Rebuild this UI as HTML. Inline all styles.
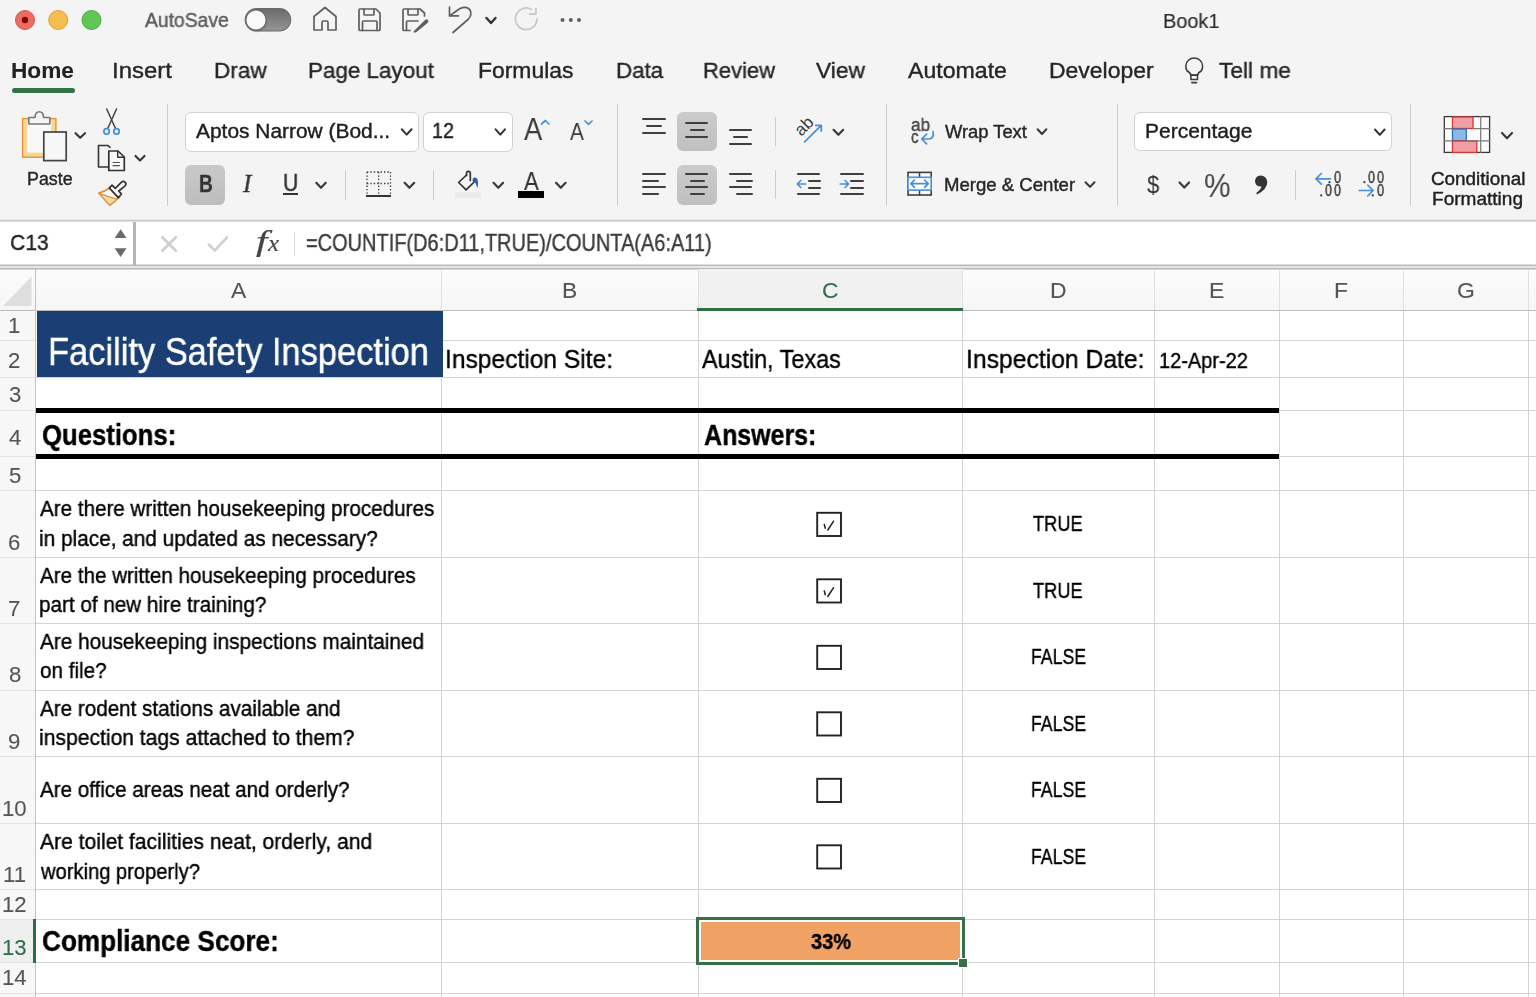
<!DOCTYPE html>
<html><head><meta charset="utf-8"><style>
html,body{margin:0;padding:0;width:1536px;height:997px;overflow:hidden;background:#fff;}
body>div,body>svg{position:absolute;}
.t{line-height:0;white-space:pre;will-change:transform;}
</style></head><body>
<div style="left:0px;top:0px;width:1536px;height:221px;background:#f4f4f4;"></div><div style="left:0px;top:219px;width:1536px;height:1px;background:#e9e9e9;"></div><div style="left:0px;top:220px;width:1536px;height:1px;background:#c6c6c6;"></div><div style="left:0px;top:221px;width:1536px;height:1px;background:#e2e2e2;"></div><div style="left:0px;top:222px;width:1536px;height:43px;background:#ffffff;"></div><div style="left:0px;top:264px;width:1536px;height:1px;background:#dedede;"></div><div style="left:0px;top:265px;width:1536px;height:1px;background:#b9b9b9;"></div><div style="left:0px;top:266px;width:1536px;height:2px;background:#e6e6e6;"></div><div style="left:0px;top:268px;width:1536px;height:1px;background:#b9b9b9;"></div><div style="left:0px;top:269px;width:1536px;height:1px;background:#d6d6d6;"></div><div style="left:133px;top:222px;width:3px;height:43px;background:#b5b5b5;"></div><div style="left:12px;top:88px;width:63px;height:5px;background:#317247;border-radius:2.5px"></div><div style="left:167px;top:104px;width:1px;height:102px;background:#cdcdcd;"></div><div style="left:185px;top:111.5px;width:234px;height:40px;background:#fff;box-sizing:border-box;border:1px solid #d2d2d2;border-radius:6px"></div><div style="left:423px;top:111.5px;width:89.5px;height:40px;background:#fff;box-sizing:border-box;border:1px solid #d2d2d2;border-radius:6px"></div><div style="left:185px;top:165px;width:40px;height:40px;background:linear-gradient(#c9c9c9,#bdbdbd);border-radius:6px"></div><div style="left:283px;top:193px;width:15px;height:1.8px;background:#333;"></div><div style="left:345px;top:170px;width:1px;height:30px;background:#cdcdcd;"></div><div style="left:366px;top:194.8px;width:25px;height:2px;background:#333;"></div><div style="left:433px;top:170px;width:1px;height:30px;background:#cdcdcd;"></div><div style="left:454.5px;top:191.5px;width:26.5px;height:6.3px;background:#ebebeb;"></div><div style="left:517.5px;top:191px;width:26.5px;height:6.5px;background:#000;"></div><div style="left:616.5px;top:104px;width:1px;height:102px;background:#cdcdcd;"></div><div style="left:677px;top:111.7px;width:39.5px;height:39.5px;background:linear-gradient(#cbcbcb,#c0c0c0);border-radius:6px"></div><div style="left:677px;top:165.4px;width:39.5px;height:39.5px;background:linear-gradient(#cbcbcb,#c0c0c0);border-radius:6px"></div><div style="left:642px;top:118px;width:24px;height:2px;background:#3f3f3f;border-radius:1px"></div><div style="left:646px;top:125px;width:16px;height:2px;background:#3f3f3f;border-radius:1px"></div><div style="left:642px;top:132px;width:24px;height:2px;background:#3f3f3f;border-radius:1px"></div><div style="left:685px;top:122px;width:23px;height:2px;background:#3f3f3f;border-radius:1px"></div><div style="left:690px;top:129px;width:15px;height:2px;background:#3f3f3f;border-radius:1px"></div><div style="left:685px;top:136px;width:23px;height:2px;background:#3f3f3f;border-radius:1px"></div><div style="left:729px;top:129px;width:23px;height:2px;background:#3f3f3f;border-radius:1px"></div><div style="left:733px;top:136px;width:15px;height:2px;background:#3f3f3f;border-radius:1px"></div><div style="left:729px;top:143px;width:23px;height:2px;background:#3f3f3f;border-radius:1px"></div><div style="left:774.5px;top:117px;width:1px;height:29px;background:#cdcdcd;"></div><div style="left:886px;top:104px;width:1px;height:102px;background:#cdcdcd;"></div><div style="left:642px;top:173px;width:24px;height:2px;background:#3f3f3f;border-radius:1px"></div><div style="left:642px;top:180px;width:17px;height:2px;background:#3f3f3f;border-radius:1px"></div><div style="left:642px;top:186px;width:24px;height:2px;background:#3f3f3f;border-radius:1px"></div><div style="left:642px;top:193px;width:17px;height:2px;background:#3f3f3f;border-radius:1px"></div><div style="left:685px;top:173px;width:23px;height:2px;background:#3f3f3f;border-radius:1px"></div><div style="left:690px;top:180px;width:15px;height:2px;background:#3f3f3f;border-radius:1px"></div><div style="left:685px;top:186px;width:23px;height:2px;background:#3f3f3f;border-radius:1px"></div><div style="left:690px;top:193px;width:15px;height:2px;background:#3f3f3f;border-radius:1px"></div><div style="left:729px;top:173px;width:23px;height:2px;background:#3f3f3f;border-radius:1px"></div><div style="left:736px;top:180px;width:17px;height:2px;background:#3f3f3f;border-radius:1px"></div><div style="left:729px;top:186px;width:23px;height:2px;background:#3f3f3f;border-radius:1px"></div><div style="left:736px;top:193px;width:17px;height:2px;background:#3f3f3f;border-radius:1px"></div><div style="left:774.5px;top:170px;width:1px;height:29px;background:#cdcdcd;"></div><div style="left:797px;top:173px;width:23px;height:2px;background:#3f3f3f;border-radius:1px"></div><div style="left:808px;top:180px;width:13px;height:2px;background:#3f3f3f;border-radius:1px"></div><div style="left:808px;top:187px;width:13px;height:2px;background:#3f3f3f;border-radius:1px"></div><div style="left:797px;top:193px;width:23px;height:2px;background:#3f3f3f;border-radius:1px"></div><div style="left:840px;top:173px;width:24px;height:2px;background:#3f3f3f;border-radius:1px"></div><div style="left:850px;top:180px;width:14px;height:2px;background:#3f3f3f;border-radius:1px"></div><div style="left:850px;top:187px;width:14px;height:2px;background:#3f3f3f;border-radius:1px"></div><div style="left:840px;top:193px;width:24px;height:2px;background:#3f3f3f;border-radius:1px"></div><div style="left:1117px;top:104px;width:1px;height:102px;background:#cdcdcd;"></div><div style="left:1134.4px;top:111.7px;width:257.5px;height:39.5px;background:#fff;box-sizing:border-box;border:1px solid #d2d2d2;border-radius:6px"></div><div style="left:1294.5px;top:169.5px;width:1px;height:30px;background:#cdcdcd;"></div><div style="left:1410px;top:104px;width:1px;height:102px;background:#cdcdcd;"></div><div style="left:293.5px;top:232px;width:1px;height:24px;background:#dddddd;"></div><div style="left:0px;top:270px;width:1536px;height:40px;background:linear-gradient(#fcfcfc,#f6f6f6);"></div><div style="left:0px;top:310px;width:36px;height:687px;background:#f7f7f7;"></div><div style="left:699px;top:269px;width:264px;height:39px;background:#f1f1f1;"></div><div style="left:0px;top:920px;width:35px;height:42px;background:#efefef;"></div><div style="left:36px;top:340px;width:1500px;height:1px;background:#d4d4d4;"></div><div style="left:36px;top:377px;width:1500px;height:1px;background:#d4d4d4;"></div><div style="left:36px;top:410px;width:1500px;height:1px;background:#d4d4d4;"></div><div style="left:36px;top:456px;width:1500px;height:1px;background:#d4d4d4;"></div><div style="left:36px;top:490px;width:1500px;height:1px;background:#d4d4d4;"></div><div style="left:36px;top:557px;width:1500px;height:1px;background:#d4d4d4;"></div><div style="left:36px;top:623px;width:1500px;height:1px;background:#d4d4d4;"></div><div style="left:36px;top:690px;width:1500px;height:1px;background:#d4d4d4;"></div><div style="left:36px;top:756px;width:1500px;height:1px;background:#d4d4d4;"></div><div style="left:36px;top:823px;width:1500px;height:1px;background:#d4d4d4;"></div><div style="left:36px;top:889px;width:1500px;height:1px;background:#d4d4d4;"></div><div style="left:36px;top:919px;width:1500px;height:1px;background:#d4d4d4;"></div><div style="left:36px;top:962px;width:1500px;height:1px;background:#d4d4d4;"></div><div style="left:36px;top:993px;width:1500px;height:1px;background:#d4d4d4;"></div><div style="left:441px;top:310px;width:1px;height:687px;background:#d4d4d4;"></div><div style="left:698px;top:310px;width:1px;height:687px;background:#d4d4d4;"></div><div style="left:962px;top:310px;width:1px;height:687px;background:#d4d4d4;"></div><div style="left:1154px;top:310px;width:1px;height:687px;background:#d4d4d4;"></div><div style="left:1279px;top:310px;width:1px;height:687px;background:#d4d4d4;"></div><div style="left:1403px;top:310px;width:1px;height:687px;background:#d4d4d4;"></div><div style="left:1528px;top:310px;width:1px;height:687px;background:#d4d4d4;"></div><div style="left:441px;top:270px;width:1px;height:40px;background:#e0e0e0;"></div><div style="left:698px;top:270px;width:1px;height:40px;background:#e0e0e0;"></div><div style="left:962px;top:270px;width:1px;height:40px;background:#e0e0e0;"></div><div style="left:1154px;top:270px;width:1px;height:40px;background:#e0e0e0;"></div><div style="left:1279px;top:270px;width:1px;height:40px;background:#e0e0e0;"></div><div style="left:1403px;top:270px;width:1px;height:40px;background:#e0e0e0;"></div><div style="left:1528px;top:270px;width:1px;height:40px;background:#e0e0e0;"></div><div style="left:0px;top:340px;width:35px;height:1px;background:#e2e2e2;"></div><div style="left:0px;top:377px;width:35px;height:1px;background:#e2e2e2;"></div><div style="left:0px;top:410px;width:35px;height:1px;background:#e2e2e2;"></div><div style="left:0px;top:456px;width:35px;height:1px;background:#e2e2e2;"></div><div style="left:0px;top:490px;width:35px;height:1px;background:#e2e2e2;"></div><div style="left:0px;top:557px;width:35px;height:1px;background:#e2e2e2;"></div><div style="left:0px;top:623px;width:35px;height:1px;background:#e2e2e2;"></div><div style="left:0px;top:690px;width:35px;height:1px;background:#e2e2e2;"></div><div style="left:0px;top:756px;width:35px;height:1px;background:#e2e2e2;"></div><div style="left:0px;top:823px;width:35px;height:1px;background:#e2e2e2;"></div><div style="left:0px;top:889px;width:35px;height:1px;background:#e2e2e2;"></div><div style="left:0px;top:919px;width:35px;height:1px;background:#e2e2e2;"></div><div style="left:0px;top:962px;width:35px;height:1px;background:#e2e2e2;"></div><div style="left:0px;top:993px;width:35px;height:1px;background:#e2e2e2;"></div><div style="left:0px;top:310px;width:1536px;height:1px;background:#bcbcbc;"></div><div style="left:35px;top:269px;width:1px;height:728px;background:#c3c3c3;"></div><div style="left:697px;top:308px;width:266px;height:3px;background:#2f6e45;"></div><div style="left:33px;top:919px;width:3px;height:44px;background:#2f6e45;"></div><div style="left:37px;top:311px;width:406px;height:66px;background:#1b3f74;"></div><div style="left:36px;top:408px;width:1243px;height:4.5px;background:#000;"></div><div style="left:36px;top:454.3px;width:1243px;height:4.6px;background:#000;"></div><div style="left:696px;top:917px;width:269px;height:48px;background:#386e48;"></div><div style="left:699px;top:920px;width:263px;height:42px;background:#ffffff;"></div><div style="left:701px;top:922px;width:259px;height:38px;background:#f0a164;"></div><div style="left:958px;top:958px;width:10px;height:10px;background:#ffffff;"></div><div style="left:959px;top:959px;width:8px;height:8px;background:#386e48;"></div>
<svg style="left:0;top:0" width="1536" height="997"><circle cx="25" cy="20" r="9.5" fill="#ee6b60" stroke="#d9574c" stroke-width="1"/><circle cx="25" cy="20" r="3.2" fill="#7e0a05"/><circle cx="58.2" cy="20" r="9.5" fill="#f5be4f" stroke="#d9a140" stroke-width="1"/><circle cx="91.5" cy="20" r="9.5" fill="#61c655" stroke="#50a93f" stroke-width="1"/><defs><linearGradient id="tg" x1="0" y1="0" x2="0" y2="1"><stop offset="0" stop-color="#6a6a6a"/><stop offset="1" stop-color="#969696"/></linearGradient><radialGradient id="ks" cx="0.5" cy="0.5" r="0.5"><stop offset="0.7" stop-color="#000" stop-opacity="0.25"/><stop offset="1" stop-color="#000" stop-opacity="0"/></radialGradient></defs><rect x="245.2" y="8.6" width="45.5" height="22.4" rx="11.2" fill="url(#tg)" stroke="#6a6a6a" stroke-width="1.1"/><circle cx="256.5" cy="21.5" r="11.5" fill="url(#ks)"/><circle cx="256" cy="20" r="10.1" fill="#f9f9f9" stroke="#6c6c6c" stroke-width="1.1"/><path d="M314 30 V16.5 L325 7.5 L336 16.5 V30 H328 V22.5 Q328 21 326.5 21 H323.5 Q322 21 322 22.5 V30 Z" fill="none" stroke="#5f5f5f" stroke-width="1.7" stroke-linecap="round" stroke-linejoin="round" /><path d="M359 10 Q359 9 360 9 H376 L380 13 V29.5 Q380 30.5 379 30.5 H360 Q359 30.5 359 29.5 Z" fill="none" stroke="#5f5f5f" stroke-width="1.7" stroke-linecap="round" stroke-linejoin="round" /><path d="M364 9 V14 Q364 15 365 15 H373 Q374 15 374 14 V9" fill="none" stroke="#5f5f5f" stroke-width="1.7" stroke-linecap="round" stroke-linejoin="round" /><path d="M362.5 30.5 V22 Q362.5 21 363.5 21 H376 Q377 21 377 22 V30.5" fill="none" stroke="#5f5f5f" stroke-width="1.7" stroke-linecap="round" stroke-linejoin="round" /><path d="M410 30.5 H404 Q403 30.5 403 29.5 V10 Q403 9 404 9 H420 L424.5 13 V16" fill="none" stroke="#5f5f5f" stroke-width="1.7" stroke-linecap="round" stroke-linejoin="round" /><path d="M408 9 V14 Q408 15 409 15 H417 Q418 15 418 14 V9" fill="none" stroke="#5f5f5f" stroke-width="1.7" stroke-linecap="round" stroke-linejoin="round" /><path d="M406.5 30 V22 Q406.5 21 407.5 21 H418" fill="none" stroke="#5f5f5f" stroke-width="1.7" stroke-linecap="round" stroke-linejoin="round" /><path d="M414 31 L425 20 Q427 18.5 428 20 Q429 21.5 427.5 23 L416.5 32 Q414.5 33 413.5 32 Z" fill="#5f5f5f"/><path d="M449.5 7 V15.8 H458.5" fill="none" stroke="#5f5f5f" stroke-width="1.7" stroke-linecap="round" stroke-linejoin="round" /><path d="M450 15.5 L460 8.5 Q467 5.5 470 10 Q472.5 15 468 19.5 L453 32.5" fill="none" stroke="#5f5f5f" stroke-width="1.7" stroke-linecap="round" stroke-linejoin="round" /><path d="M486.5 18 L491 23 L495.5 18" fill="none" stroke="#333" stroke-width="2.4" stroke-linecap="round" stroke-linejoin="round" /><path d="M537 18.8 A10.8 10.8 0 1 1 531.5 9.4" fill="none" stroke="#c6c6c6" stroke-width="1.7" stroke-linecap="round" stroke-linejoin="round" /><path d="M529.8 14.2 H535.9 V8.3" fill="none" stroke="#c6c6c6" stroke-width="1.7" stroke-linecap="round" stroke-linejoin="round" /><circle cx="562.5" cy="20" r="2" fill="#5f5f5f"/><circle cx="570.8" cy="20" r="2" fill="#5f5f5f"/><circle cx="579" cy="20" r="2" fill="#5f5f5f"/><path d="M1190.9 75.3 Q1190.6 72.8 1187.2 71 A8.4 8.4 0 1 1 1201.2 71 Q1197.8 72.8 1197.5 75.3 Z" fill="none" stroke="#3a3a3a" stroke-width="1.5" stroke-linecap="round" stroke-linejoin="round" /><rect x="1190.9" y="75" width="6.6" height="4.5" fill="none" stroke="#3a3a3a" stroke-width="1.5"/><path d="M1191.8 82.6 H1196.6" fill="none" stroke="#3a3a3a" stroke-width="1.6" stroke-linecap="round" stroke-linejoin="round" /><rect x="22.6" y="118.6" width="33.3" height="38.6" fill="#f5d892" stroke="#e8913a" stroke-width="1.4"/><rect x="27" y="122" width="24.3" height="30.6" fill="#f8f8f8"/><path d="M28.8 124 V117.5 H35 Q35.5 111.8 39.3 111.8 Q43.2 111.8 43.6 117.5 H49.8 V124 Z" fill="#f4f4f4" stroke="#777" stroke-width="1.6" stroke-linecap="round" stroke-linejoin="round" /><rect x="43.8" y="132" width="22.4" height="28.6" fill="#f7f7f7" stroke="#444" stroke-width="1.7"/><path d="M75.5 133.2 L80.2 137.8 L85 133.2" fill="none" stroke="#3a3a3a" stroke-width="2.2" stroke-linecap="round" stroke-linejoin="round" /><path d="M106.7 109 L115.5 128.5 M116.5 109 L107.7 128.5" fill="none" stroke="#444" stroke-width="1.5" stroke-linecap="round" stroke-linejoin="round" /><circle cx="106.6" cy="131.4" r="2.7" fill="none" stroke="#4a90d9" stroke-width="1.8"/><circle cx="116.5" cy="131.4" r="2.7" fill="none" stroke="#4a90d9" stroke-width="1.8"/><path d="M108 167 H98.5 V145.5 H108 L110 147.5" fill="none" stroke="#333" stroke-width="1.6" stroke-linecap="round" stroke-linejoin="round" /><path d="M108.8 151 H118 L124.3 157 V170.5 H108.8 Z" fill="#f7f7f7" stroke="#333" stroke-width="1.7" stroke-linecap="round" stroke-linejoin="round" /><path d="M117.7 151 V157.2 H124" fill="none" stroke="#333" stroke-width="1.4" stroke-linecap="round" stroke-linejoin="round" /><path d="M113 162.5 H119.5 M113 165.6 H119.5" fill="none" stroke="#555" stroke-width="1.2" stroke-linecap="round" stroke-linejoin="round" /><path d="M135.5 156 L140 160.5 L144.5 156" fill="none" stroke="#3a3a3a" stroke-width="2.2" stroke-linecap="round" stroke-linejoin="round" /><path d="M98.8 193 Q104.5 191.8 109.3 187.8 L118.5 197.8 Q114.5 202.3 109.7 205.2 Z" fill="#f8f8f8" stroke="#e38b3c" stroke-width="1.6" stroke-linejoin="round"/><path d="M103.8 196.3 L115.2 199.8 L110.2 203.8 Z" fill="#f3dc8a"/><path d="M99.5 193.6 L116.8 199.4" fill="none" stroke="#e38b3c" stroke-width="1.5" stroke-linecap="round" stroke-linejoin="round" /><path d="M109.3 187.8 L112.1 185.2 L115.3 188.3 L121.3 182.3 Q123.4 180.5 125.2 182.3 Q126.8 184.3 124.8 186.2 L118.7 191 L121.4 193.9 L118.5 197.8 Z" fill="#f8f8f8" stroke="#333" stroke-width="1.7" stroke-linejoin="round"/><path d="M401.8 129.3 L406.7 134.6 L411.6 129.3" fill="none" stroke="#333" stroke-width="2" stroke-linecap="round" stroke-linejoin="round" /><path d="M495.6 129.3 L500.3 134.6 L505 129.3" fill="none" stroke="#333" stroke-width="2" stroke-linecap="round" stroke-linejoin="round" /><path d="M541.5 124 L545.3 120.5 L549 124" fill="none" stroke="#4a90d9" stroke-width="1.7" stroke-linecap="round" stroke-linejoin="round" /><path d="M585 121 L588.5 124.3 L592 121" fill="none" stroke="#4a90d9" stroke-width="1.7" stroke-linecap="round" stroke-linejoin="round" /><path d="M316.3 182.8 L321 187.8 L325.7 182.8" fill="none" stroke="#3a3a3a" stroke-width="2.2" stroke-linecap="round" stroke-linejoin="round" /><path d="M367 172 H390.5 M367 183.5 H390.5 M367 172 V195 M378.7 172 V195 M390.5 172 V195" stroke="#333" stroke-width="1.3" stroke-dasharray="1.3 2.1" fill="none"/><path d="M404.6 182.8 L409.4 187.8 L414.2 182.8" fill="none" stroke="#3a3a3a" stroke-width="2.2" stroke-linecap="round" stroke-linejoin="round" /><path d="M466.5 175 L458.6 182.5 L466.1 189.8 L474.6 181.5 L473.2 180" fill="none" stroke="#333" stroke-width="1.7" stroke-linecap="round" stroke-linejoin="round" /><path d="M466.5 175.5 V173.5 Q466.5 171.4 468.4 171.4 Q470.3 171.4 470.3 173.5 V180.5" fill="none" stroke="#333" stroke-width="1.7" stroke-linecap="round" stroke-linejoin="round" /><path d="M472.8 178.4 Q475.3 176.2 477.2 178.8 Q478.8 182 477.4 188.6 Q476.3 183.5 474.3 181.6 Z" fill="#2a62c0"/><path d="M493.5 182.8 L498.3 187.8 L503.1 182.8" fill="none" stroke="#3a3a3a" stroke-width="2.2" stroke-linecap="round" stroke-linejoin="round" /><path d="M556 182.8 L560.8 187.8 L565.6 182.8" fill="none" stroke="#3a3a3a" stroke-width="2.2" stroke-linecap="round" stroke-linejoin="round" /><text x="801.3" y="136.7" transform="rotate(-45 801.3 136.7)" font-family="Liberation Sans" font-size="17" fill="#3a3a3a">ab</text><path d="M804.6 141.8 L821 125.6 M815.8 125.4 H821.3 V131" fill="none" stroke="#4a8fd6" stroke-width="1.8" stroke-linecap="round" stroke-linejoin="round" /><path d="M833.6 129.8 L838.4 134.8 L843.2 129.8" fill="none" stroke="#3a3a3a" stroke-width="2.2" stroke-linecap="round" stroke-linejoin="round" /><path d="M797.5 184 H805.5 M800.8 180.5 L797.3 184 L800.8 187.5" fill="none" stroke="#4a90d9" stroke-width="1.7" stroke-linecap="round" stroke-linejoin="round" /><path d="M840.3 184 H848.3 M845 180.5 L848.5 184 L845 187.5" fill="none" stroke="#4a90d9" stroke-width="1.7" stroke-linecap="round" stroke-linejoin="round" /><path d="M933 131.6 Q934.5 137.5 929.5 139 H922 M926.6 134.2 L921.7 139 L926.6 143.8" fill="none" stroke="#4a8fd6" stroke-width="1.7" stroke-linecap="round" stroke-linejoin="round" /><path d="M1037.6 129.3 L1042 134 L1046.4 129.3" fill="none" stroke="#3a3a3a" stroke-width="2" stroke-linecap="round" stroke-linejoin="round" /><rect x="908" y="172.4" width="23.2" height="22.6" fill="#fafafa" stroke="#3f3f3f" stroke-width="1.6"/><path d="M919.5 172.4 V177 M919.5 190.4 V195" fill="none" stroke="#3f3f3f" stroke-width="1.5" stroke-linecap="round" stroke-linejoin="round" /><rect x="908" y="177.3" width="23.2" height="12.8" fill="#ffffff" stroke="#4a8fd6" stroke-width="1.6"/><path d="M910.8 183.7 H928.3 M914.5 180 L910.8 183.7 L914.5 187.4 M924.6 180 L928.3 183.7 L924.6 187.4" fill="none" stroke="#4a8fd6" stroke-width="1.7" stroke-linecap="round" stroke-linejoin="round" /><path d="M1085.5 182.2 L1090 186.9 L1094.5 182.2" fill="none" stroke="#3a3a3a" stroke-width="2" stroke-linecap="round" stroke-linejoin="round" /><path d="M1375 129.5 L1379.8 134.8 L1384.6 129.5" fill="none" stroke="#333" stroke-width="2" stroke-linecap="round" stroke-linejoin="round" /><path d="M1179.5 182.5 L1184.3 187.5 L1189.1 182.5" fill="none" stroke="#3a3a3a" stroke-width="2.2" stroke-linecap="round" stroke-linejoin="round" /><path d="M1260.5 175.5 Q1266.5 175.5 1267.3 182 Q1267.5 189 1257 194.5 L1256.2 193 Q1261 189.5 1261.5 186.5 Q1255 186.5 1255 181 Q1255.5 175.8 1260.5 175.5 Z" fill="#333"/><circle cx="1329.5" cy="182.2" r="1.1" fill="#3a3a3a"/><circle cx="1321.2" cy="195.4" r="1.1" fill="#3a3a3a"/><circle cx="1364.4" cy="182.2" r="1.1" fill="#3a3a3a"/><circle cx="1372.8" cy="195.4" r="1.1" fill="#3a3a3a"/><path d="M1316 178.8 H1330.4 M1321.3 173.5 L1316 178.8 L1321.3 184.1" fill="none" stroke="#4a8fd6" stroke-width="1.7" stroke-linecap="round" stroke-linejoin="round" /><path d="M1359.3 190.5 H1373.2 M1367.8 185.2 L1373.2 190.5 L1367.8 195.8" fill="none" stroke="#4a8fd6" stroke-width="1.7" stroke-linecap="round" stroke-linejoin="round" /><rect x="1444.3" y="116.6" width="45.3" height="35.8" fill="#fafafa" stroke="#3a3a3a" stroke-width="1.3"/><rect x="1452.5" y="117" width="20.5" height="11.5" fill="#f09ea4" stroke="#d2382f" stroke-width="1.3"/><rect x="1452.5" y="129" width="13.8" height="11.7" fill="#8cb8e6" stroke="#2c6fc2" stroke-width="1.3"/><rect x="1452.5" y="141" width="24.3" height="11.4" fill="#f09ea4" stroke="#d2382f" stroke-width="1.3"/><path d="M1444.3 128.7 H1452 M1473.5 128.7 H1489.6 M1444.3 140.9 H1452 M1466.8 140.9 H1489.6 M1480.7 116.6 V141 M1480.7 141 V152.4" fill="none" stroke="#7a7a7a" stroke-width="1.2" stroke-linecap="round" stroke-linejoin="round" /><path d="M1502 133 L1507 138.2 L1512 133" fill="none" stroke="#3a3a3a" stroke-width="2.2" stroke-linecap="round" stroke-linejoin="round" /><path d="M114.7 238 L120.6 229.2 L126.5 238 Z M114.7 248.3 L120.6 257 L126.5 248.3 Z" fill="#6a6a6a"/><path d="M162.3 237.3 L175.8 250.8 M175.8 237.3 L162.3 250.8" fill="none" stroke="#d0d0d0" stroke-width="2.7" stroke-linecap="round" stroke-linejoin="round" /><path d="M208.8 244.6 L214.9 250.4 L227 237.4" fill="none" stroke="#d0d0d0" stroke-width="2.7" stroke-linecap="round" stroke-linejoin="round" /><path d="M3 306 L31.5 276.5 V306 Z" fill="#dedede"/><rect x="817.2" y="512.8" width="23.8" height="23.2" fill="none" stroke="#222" stroke-width="1.9"/><path d="M824.3 524.5 L825.3 528.2 M827.8 530 L833.6 521.2" fill="none" stroke="#222" stroke-width="1.5" stroke-linecap="round" stroke-linejoin="round" /><rect x="817.2" y="579.3" width="23.8" height="23.2" fill="none" stroke="#222" stroke-width="1.9"/><path d="M824.3 591.0 L825.3 594.7 M827.8 596.5 L833.6 587.7" fill="none" stroke="#222" stroke-width="1.5" stroke-linecap="round" stroke-linejoin="round" /><rect x="817.2" y="645.8" width="23.8" height="23.2" fill="none" stroke="#222" stroke-width="1.9"/><rect x="817.2" y="712.3" width="23.8" height="23.2" fill="none" stroke="#222" stroke-width="1.9"/><rect x="817.2" y="778.8" width="23.8" height="23.2" fill="none" stroke="#222" stroke-width="1.9"/><rect x="817.2" y="845.3" width="23.8" height="23.2" fill="none" stroke="#222" stroke-width="1.9"/></svg>

<div class="t" style="left:145.20px;top:19.50px;font:normal 400 19.57px 'Liberation Sans';line-height:0;color:#5e5e5e;-webkit-text-stroke:0.45px #5e5e5e;transform:scaleX(0.9870);transform-origin:0 0;">AutoSave</div><div class="t" style="left:1163.22px;top:20.70px;font:normal 400 20.29px 'Liberation Sans';line-height:0;color:#2b2b2b;-webkit-text-stroke:0.15px #2b2b2b;transform:scaleX(0.9824);transform-origin:0 0;">Book1</div><div class="t" style="left:11.40px;top:71.20px;font:normal 700 22.57px 'Liberation Sans';line-height:0;color:#222;-webkit-text-stroke:0.1px #222;transform:scaleX(1.0043);transform-origin:0 0;">Home</div><div class="t" style="left:111.81px;top:70.20px;font:normal 400 22.90px 'Liberation Sans';line-height:0;color:#262626;-webkit-text-stroke:0.4px #262626;transform:scaleX(1.0456);transform-origin:0 0;">Insert</div><div class="t" style="left:214.02px;top:70.20px;font:normal 400 22.90px 'Liberation Sans';line-height:0;color:#262626;-webkit-text-stroke:0.4px #262626;transform:scaleX(0.9837);transform-origin:0 0;">Draw</div><div class="t" style="left:308.22px;top:70.20px;font:normal 400 22.90px 'Liberation Sans';line-height:0;color:#262626;-webkit-text-stroke:0.4px #262626;transform:scaleX(0.9789);transform-origin:0 0;">Page Layout</div><div class="t" style="left:477.70px;top:70.20px;font:normal 400 22.90px 'Liberation Sans';line-height:0;color:#262626;-webkit-text-stroke:0.4px #262626;">Formulas</div><div class="t" style="left:615.52px;top:70.20px;font:normal 400 22.90px 'Liberation Sans';line-height:0;color:#262626;-webkit-text-stroke:0.4px #262626;transform:scaleX(0.9770);transform-origin:0 0;">Data</div><div class="t" style="left:703.04px;top:70.20px;font:normal 400 22.90px 'Liberation Sans';line-height:0;color:#262626;-webkit-text-stroke:0.4px #262626;transform:scaleX(0.9599);transform-origin:0 0;">Review</div><div class="t" style="left:816.10px;top:70.20px;font:normal 400 22.90px 'Liberation Sans';line-height:0;color:#262626;-webkit-text-stroke:0.4px #262626;transform:scaleX(0.9930);transform-origin:0 0;">View</div><div class="t" style="left:907.80px;top:70.20px;font:normal 400 22.90px 'Liberation Sans';line-height:0;color:#262626;-webkit-text-stroke:0.4px #262626;transform:scaleX(1.0094);transform-origin:0 0;">Automate</div><div class="t" style="left:1048.60px;top:70.20px;font:normal 400 22.90px 'Liberation Sans';line-height:0;color:#262626;-webkit-text-stroke:0.4px #262626;transform:scaleX(1.0034);transform-origin:0 0;">Developer</div><div class="t" style="left:1219.40px;top:70.20px;font:normal 400 22.90px 'Liberation Sans';line-height:0;color:#262626;-webkit-text-stroke:0.4px #262626;transform:scaleX(0.9912);transform-origin:0 0;">Tell me</div><div class="t" style="left:26.69px;top:178.80px;font:normal 400 17.68px 'Liberation Sans';line-height:0;color:#262626;-webkit-text-stroke:0.4px #262626;transform:scaleX(1.0076);transform-origin:0 0;">Paste</div><div class="t" style="left:195.50px;top:130.60px;font:normal 400 20.00px 'Liberation Sans';line-height:0;color:#1e1e1e;-webkit-text-stroke:0.4px #1e1e1e;transform:scaleX(1.0458);transform-origin:0 0;">Aptos Narrow (Bod...</div><div class="t" style="left:431.88px;top:131.20px;font:normal 400 21.45px 'Liberation Sans';line-height:0;color:#1e1e1e;-webkit-text-stroke:0.4px #1e1e1e;transform:scaleX(0.9214);transform-origin:0 0;">12</div><div class="t" style="left:523.90px;top:129.20px;font:normal 400 31.88px 'Liberation Sans';line-height:0;color:#3a3a3a;transform:scaleX(0.8591);transform-origin:0 0;">A</div><div class="t" style="left:570.20px;top:132.20px;font:normal 400 24.64px 'Liberation Sans';line-height:0;color:#3a3a3a;transform:scaleX(0.8412);transform-origin:0 0;">A</div><div class="t" style="left:198.59px;top:183.50px;font:normal 700 23.57px 'Liberation Sans';line-height:0;color:#333;-webkit-text-stroke:0.4px #333;transform:scaleX(0.8067);transform-origin:0 0;">B</div><div class="t" style="left:243.45px;top:183.50px;font:italic 400 26.15px 'Liberation Serif';line-height:0;color:#333;-webkit-text-stroke:0.4px #333;transform:scaleX(0.9545);transform-origin:0 0;">I</div><div class="t" style="left:283.09px;top:182.50px;font:normal 400 23.19px 'Liberation Sans';line-height:0;color:#333;-webkit-text-stroke:0.4px #333;transform:scaleX(0.9143);transform-origin:0 0;">U</div><div class="t" style="left:523.60px;top:180.60px;font:normal 400 26.09px 'Liberation Sans';line-height:0;color:#333;-webkit-text-stroke:0.1px #333;transform:scaleX(0.8500);transform-origin:0 0;">A</div><div class="t" style="left:911.00px;top:124.80px;font:normal 400 17.83px 'Liberation Sans';line-height:0;color:#454545;-webkit-text-stroke:0.4px #454545;transform:scaleX(0.9595);transform-origin:0 0;">ab</div><div class="t" style="left:911.00px;top:136.70px;font:normal 400 17.83px 'Liberation Sans';line-height:0;color:#454545;-webkit-text-stroke:0.4px #454545;transform:scaleX(0.8444);transform-origin:0 0;">c</div><div class="t" style="left:944.60px;top:131.80px;font:normal 400 17.68px 'Liberation Sans';line-height:0;color:#262626;-webkit-text-stroke:0.4px #262626;transform:scaleX(1.0377);transform-origin:0 0;">Wrap Text</div><div class="t" style="left:943.57px;top:185.30px;font:normal 400 17.97px 'Liberation Sans';line-height:0;color:#262626;-webkit-text-stroke:0.4px #262626;transform:scaleX(1.0346);transform-origin:0 0;">Merge &amp; Center</div><div class="t" style="left:1144.50px;top:131.00px;font:normal 400 21.01px 'Liberation Sans';line-height:0;color:#1e1e1e;-webkit-text-stroke:0.4px #1e1e1e;transform:scaleX(0.9969);transform-origin:0 0;">Percentage</div><div class="t" style="left:1146.70px;top:185.00px;font:normal 400 24.64px 'Liberation Sans';line-height:0;color:#333;transform:scaleX(0.8929);transform-origin:0 0;">$</div><div class="t" style="left:1203.89px;top:185.70px;font:normal 400 32.61px 'Liberation Sans';line-height:0;color:#444;transform:scaleX(0.9148);transform-origin:0 0;">%</div><div class="t" style="left:1333.70px;top:177.70px;font:normal 400 16.52px 'Liberation Sans';line-height:0;color:#3a3a3a;-webkit-text-stroke:0.4px #3a3a3a;transform:scaleX(0.7778);transform-origin:0 0;">0</div><div class="t" style="left:1325.40px;top:191.25px;font:normal 400 16.52px 'Liberation Sans';line-height:0;color:#3a3a3a;-webkit-text-stroke:0.4px #3a3a3a;transform:scaleX(0.7556);transform-origin:0 0;">0</div><div class="t" style="left:1333.90px;top:191.25px;font:normal 400 16.52px 'Liberation Sans';line-height:0;color:#3a3a3a;-webkit-text-stroke:0.4px #3a3a3a;transform:scaleX(0.7556);transform-origin:0 0;">0</div><div class="t" style="left:1368.30px;top:177.70px;font:normal 400 16.52px 'Liberation Sans';line-height:0;color:#3a3a3a;-webkit-text-stroke:0.4px #3a3a3a;transform:scaleX(0.7556);transform-origin:0 0;">0</div><div class="t" style="left:1377.10px;top:177.70px;font:normal 400 16.52px 'Liberation Sans';line-height:0;color:#3a3a3a;-webkit-text-stroke:0.4px #3a3a3a;transform:scaleX(0.7667);transform-origin:0 0;">0</div><div class="t" style="left:1377.00px;top:191.25px;font:normal 400 16.52px 'Liberation Sans';line-height:0;color:#3a3a3a;-webkit-text-stroke:0.4px #3a3a3a;transform:scaleX(0.7778);transform-origin:0 0;">0</div><div class="t" style="left:1431.00px;top:178.50px;font:normal 400 17.83px 'Liberation Sans';line-height:0;color:#1e1e1e;-webkit-text-stroke:0.4px #1e1e1e;transform:scaleX(1.0582);transform-origin:0 0;">Conditional</div><div class="t" style="left:1432.13px;top:198.90px;font:normal 400 17.83px 'Liberation Sans';line-height:0;color:#1e1e1e;-webkit-text-stroke:0.4px #1e1e1e;transform:scaleX(1.0682);transform-origin:0 0;">Formatting</div><div class="t" style="left:9.77px;top:241.70px;font:normal 400 22.75px 'Liberation Sans';line-height:0;color:#222;-webkit-text-stroke:0.4px #222;transform:scaleX(0.9281);transform-origin:0 0;">C13</div><div class="t" style="left:256.20px;top:241.40px;font:italic 400 29.69px 'Liberation Serif';line-height:0;color:#444;-webkit-text-stroke:0.2px #444;transform:scaleX(1.4000);transform-origin:0 0;">f</div><div class="t" style="left:268.44px;top:243.40px;font:italic 400 23.85px 'Liberation Serif';line-height:0;color:#444;-webkit-text-stroke:0.2px #444;transform:scaleX(1.0417);transform-origin:0 0;">x</div><div class="t" style="left:306.34px;top:243.10px;font:normal 400 23.19px 'Liberation Sans';line-height:0;color:#3c3c3c;-webkit-text-stroke:0.4px #3c3c3c;transform:scaleX(0.8615);transform-origin:0 0;">=COUNTIF(D6:D11,TRUE)/COUNTA(A6:A11)</div><div class="t" style="left:230.50px;top:290.00px;font:normal 400 22.90px 'Liberation Sans';line-height:0;color:#555;-webkit-text-stroke:0.1px #555;">A</div><div class="t" style="left:562.00px;top:290.00px;font:normal 400 22.90px 'Liberation Sans';line-height:0;color:#555;-webkit-text-stroke:0.1px #555;">B</div><div class="t" style="left:822.00px;top:290.00px;font:normal 400 22.90px 'Liberation Sans';line-height:0;color:#2f6e45;-webkit-text-stroke:0.1px #2f6e45;">C</div><div class="t" style="left:1050.00px;top:290.00px;font:normal 400 22.90px 'Liberation Sans';line-height:0;color:#555;-webkit-text-stroke:0.1px #555;">D</div><div class="t" style="left:1209.00px;top:290.00px;font:normal 400 22.90px 'Liberation Sans';line-height:0;color:#555;-webkit-text-stroke:0.1px #555;">E</div><div class="t" style="left:1334.00px;top:290.00px;font:normal 400 22.90px 'Liberation Sans';line-height:0;color:#555;-webkit-text-stroke:0.1px #555;">F</div><div class="t" style="left:1457.00px;top:290.00px;font:normal 400 22.90px 'Liberation Sans';line-height:0;color:#555;-webkit-text-stroke:0.1px #555;">G</div><div class="t" style="left:8.30px;top:326.00px;font:normal 400 22.17px 'Liberation Sans';line-height:0;color:#555;-webkit-text-stroke:0.1px #555;">1</div><div class="t" style="left:8.30px;top:361.30px;font:normal 400 22.17px 'Liberation Sans';line-height:0;color:#555;-webkit-text-stroke:0.1px #555;">2</div><div class="t" style="left:8.80px;top:394.50px;font:normal 400 22.17px 'Liberation Sans';line-height:0;color:#555;-webkit-text-stroke:0.1px #555;">3</div><div class="t" style="left:8.80px;top:437.50px;font:normal 400 22.17px 'Liberation Sans';line-height:0;color:#555;-webkit-text-stroke:0.1px #555;">4</div><div class="t" style="left:8.80px;top:476.00px;font:normal 400 22.17px 'Liberation Sans';line-height:0;color:#555;-webkit-text-stroke:0.1px #555;">5</div><div class="t" style="left:8.30px;top:542.50px;font:normal 400 22.17px 'Liberation Sans';line-height:0;color:#555;-webkit-text-stroke:0.1px #555;">6</div><div class="t" style="left:8.30px;top:608.80px;font:normal 400 22.17px 'Liberation Sans';line-height:0;color:#555;-webkit-text-stroke:0.1px #555;">7</div><div class="t" style="left:8.80px;top:675.30px;font:normal 400 22.17px 'Liberation Sans';line-height:0;color:#555;-webkit-text-stroke:0.1px #555;">8</div><div class="t" style="left:8.30px;top:742.40px;font:normal 400 22.17px 'Liberation Sans';line-height:0;color:#555;-webkit-text-stroke:0.1px #555;">9</div><div class="t" style="left:2.14px;top:808.90px;font:normal 400 22.17px 'Liberation Sans';line-height:0;color:#555;-webkit-text-stroke:0.1px #555;">10</div><div class="t" style="left:2.96px;top:875.40px;font:normal 400 22.17px 'Liberation Sans';line-height:0;color:#555;-webkit-text-stroke:0.1px #555;">11</div><div class="t" style="left:2.14px;top:904.70px;font:normal 400 22.17px 'Liberation Sans';line-height:0;color:#555;-webkit-text-stroke:0.1px #555;">12</div><div class="t" style="left:2.14px;top:948.40px;font:normal 400 22.17px 'Liberation Sans';line-height:0;color:#2f6e45;-webkit-text-stroke:0.1px #2f6e45;">13</div><div class="t" style="left:2.14px;top:978.10px;font:normal 400 22.17px 'Liberation Sans';line-height:0;color:#555;-webkit-text-stroke:0.1px #555;">14</div><div class="t" style="left:47.79px;top:351.50px;font:normal 400 38.12px 'Liberation Sans';line-height:0;color:#ffffff;-webkit-text-stroke:0.4px #ffffff;transform:scaleX(0.9039);transform-origin:0 0;">Facility Safety Inspection</div><div class="t" style="left:445.31px;top:358.70px;font:normal 400 25.94px 'Liberation Sans';line-height:0;color:#000;-webkit-text-stroke:0.4px #000;transform:scaleX(0.9472);transform-origin:0 0;">Inspection Site:</div><div class="t" style="left:702.40px;top:358.70px;font:normal 400 25.94px 'Liberation Sans';line-height:0;color:#000;-webkit-text-stroke:0.4px #000;transform:scaleX(0.9029);transform-origin:0 0;">Austin, Texas</div><div class="t" style="left:965.90px;top:358.70px;font:normal 400 25.94px 'Liberation Sans';line-height:0;color:#000;-webkit-text-stroke:0.4px #000;transform:scaleX(0.9523);transform-origin:0 0;">Inspection Date:</div><div class="t" style="left:1159.13px;top:360.00px;font:normal 400 22.90px 'Liberation Sans';line-height:0;color:#000;-webkit-text-stroke:0.4px #000;transform:scaleX(0.8740);transform-origin:0 0;">12-Apr-22</div><div class="t" style="left:41.52px;top:434.50px;font:normal 700 29.29px 'Liberation Sans';line-height:0;color:#000;-webkit-text-stroke:0.4px #000;transform:scaleX(0.8773);transform-origin:0 0;">Questions:</div><div class="t" style="left:703.70px;top:434.50px;font:normal 700 29.29px 'Liberation Sans';line-height:0;color:#000;-webkit-text-stroke:0.4px #000;transform:scaleX(0.8528);transform-origin:0 0;">Answers:</div><div class="t" style="left:40.10px;top:509.20px;font:normal 400 22.46px 'Liberation Sans';line-height:0;color:#000;-webkit-text-stroke:0.4px #000;transform:scaleX(0.9181);transform-origin:0 0;">Are there written housekeeping procedures</div><div class="t" style="left:39.17px;top:538.60px;font:normal 400 22.46px 'Liberation Sans';line-height:0;color:#000;-webkit-text-stroke:0.4px #000;transform:scaleX(0.9263);transform-origin:0 0;">in place, and updated as necessary?</div><div class="t" style="left:40.10px;top:575.80px;font:normal 400 22.46px 'Liberation Sans';line-height:0;color:#000;-webkit-text-stroke:0.4px #000;transform:scaleX(0.9175);transform-origin:0 0;">Are the written housekeeping procedures</div><div class="t" style="left:39.18px;top:605.00px;font:normal 400 22.46px 'Liberation Sans';line-height:0;color:#000;-webkit-text-stroke:0.4px #000;transform:scaleX(0.9196);transform-origin:0 0;">part of new hire training?</div><div class="t" style="left:40.10px;top:641.80px;font:normal 400 22.46px 'Liberation Sans';line-height:0;color:#000;-webkit-text-stroke:0.4px #000;transform:scaleX(0.9237);transform-origin:0 0;">Are housekeeping inspections maintained</div><div class="t" style="left:40.10px;top:671.20px;font:normal 400 22.46px 'Liberation Sans';line-height:0;color:#000;-webkit-text-stroke:0.4px #000;transform:scaleX(0.9191);transform-origin:0 0;">on file?</div><div class="t" style="left:40.10px;top:708.50px;font:normal 400 22.46px 'Liberation Sans';line-height:0;color:#000;-webkit-text-stroke:0.4px #000;transform:scaleX(0.9190);transform-origin:0 0;">Are rodent stations available and</div><div class="t" style="left:39.16px;top:737.60px;font:normal 400 22.46px 'Liberation Sans';line-height:0;color:#000;-webkit-text-stroke:0.4px #000;transform:scaleX(0.9396);transform-origin:0 0;">inspection tags attached to them?</div><div class="t" style="left:40.10px;top:789.70px;font:normal 400 22.46px 'Liberation Sans';line-height:0;color:#000;-webkit-text-stroke:0.4px #000;transform:scaleX(0.9163);transform-origin:0 0;">Are office areas neat and orderly?</div><div class="t" style="left:40.10px;top:841.50px;font:normal 400 22.46px 'Liberation Sans';line-height:0;color:#000;-webkit-text-stroke:0.4px #000;transform:scaleX(0.9385);transform-origin:0 0;">Are toilet facilities neat, orderly, and</div><div class="t" style="left:41.00px;top:871.60px;font:normal 400 22.46px 'Liberation Sans';line-height:0;color:#000;-webkit-text-stroke:0.4px #000;transform:scaleX(0.8969);transform-origin:0 0;">working properly?</div><div class="t" style="left:1033.30px;top:524.00px;font:normal 400 22.61px 'Liberation Sans';line-height:0;color:#000;-webkit-text-stroke:0.4px #000;transform:scaleX(0.8057);transform-origin:0 0;">TRUE</div><div class="t" style="left:1033.30px;top:590.50px;font:normal 400 22.61px 'Liberation Sans';line-height:0;color:#000;-webkit-text-stroke:0.4px #000;transform:scaleX(0.8057);transform-origin:0 0;">TRUE</div><div class="t" style="left:1030.92px;top:657.00px;font:normal 400 22.61px 'Liberation Sans';line-height:0;color:#000;-webkit-text-stroke:0.4px #000;transform:scaleX(0.7826);transform-origin:0 0;">FALSE</div><div class="t" style="left:1030.92px;top:723.50px;font:normal 400 22.61px 'Liberation Sans';line-height:0;color:#000;-webkit-text-stroke:0.4px #000;transform:scaleX(0.7826);transform-origin:0 0;">FALSE</div><div class="t" style="left:1030.92px;top:790.00px;font:normal 400 22.61px 'Liberation Sans';line-height:0;color:#000;-webkit-text-stroke:0.4px #000;transform:scaleX(0.7826);transform-origin:0 0;">FALSE</div><div class="t" style="left:1030.92px;top:856.50px;font:normal 400 22.61px 'Liberation Sans';line-height:0;color:#000;-webkit-text-stroke:0.4px #000;transform:scaleX(0.7826);transform-origin:0 0;">FALSE</div><div class="t" style="left:41.78px;top:940.50px;font:normal 700 28.57px 'Liberation Sans';line-height:0;color:#000;-webkit-text-stroke:0.4px #000;transform:scaleX(0.9153);transform-origin:0 0;">Compliance Score:</div><div class="t" style="left:810.80px;top:941.90px;font:normal 700 22.00px 'Liberation Sans';line-height:0;color:#000;-webkit-text-stroke:0.4px #000;transform:scaleX(0.9087);transform-origin:0 0;">33%</div>
</body></html>
